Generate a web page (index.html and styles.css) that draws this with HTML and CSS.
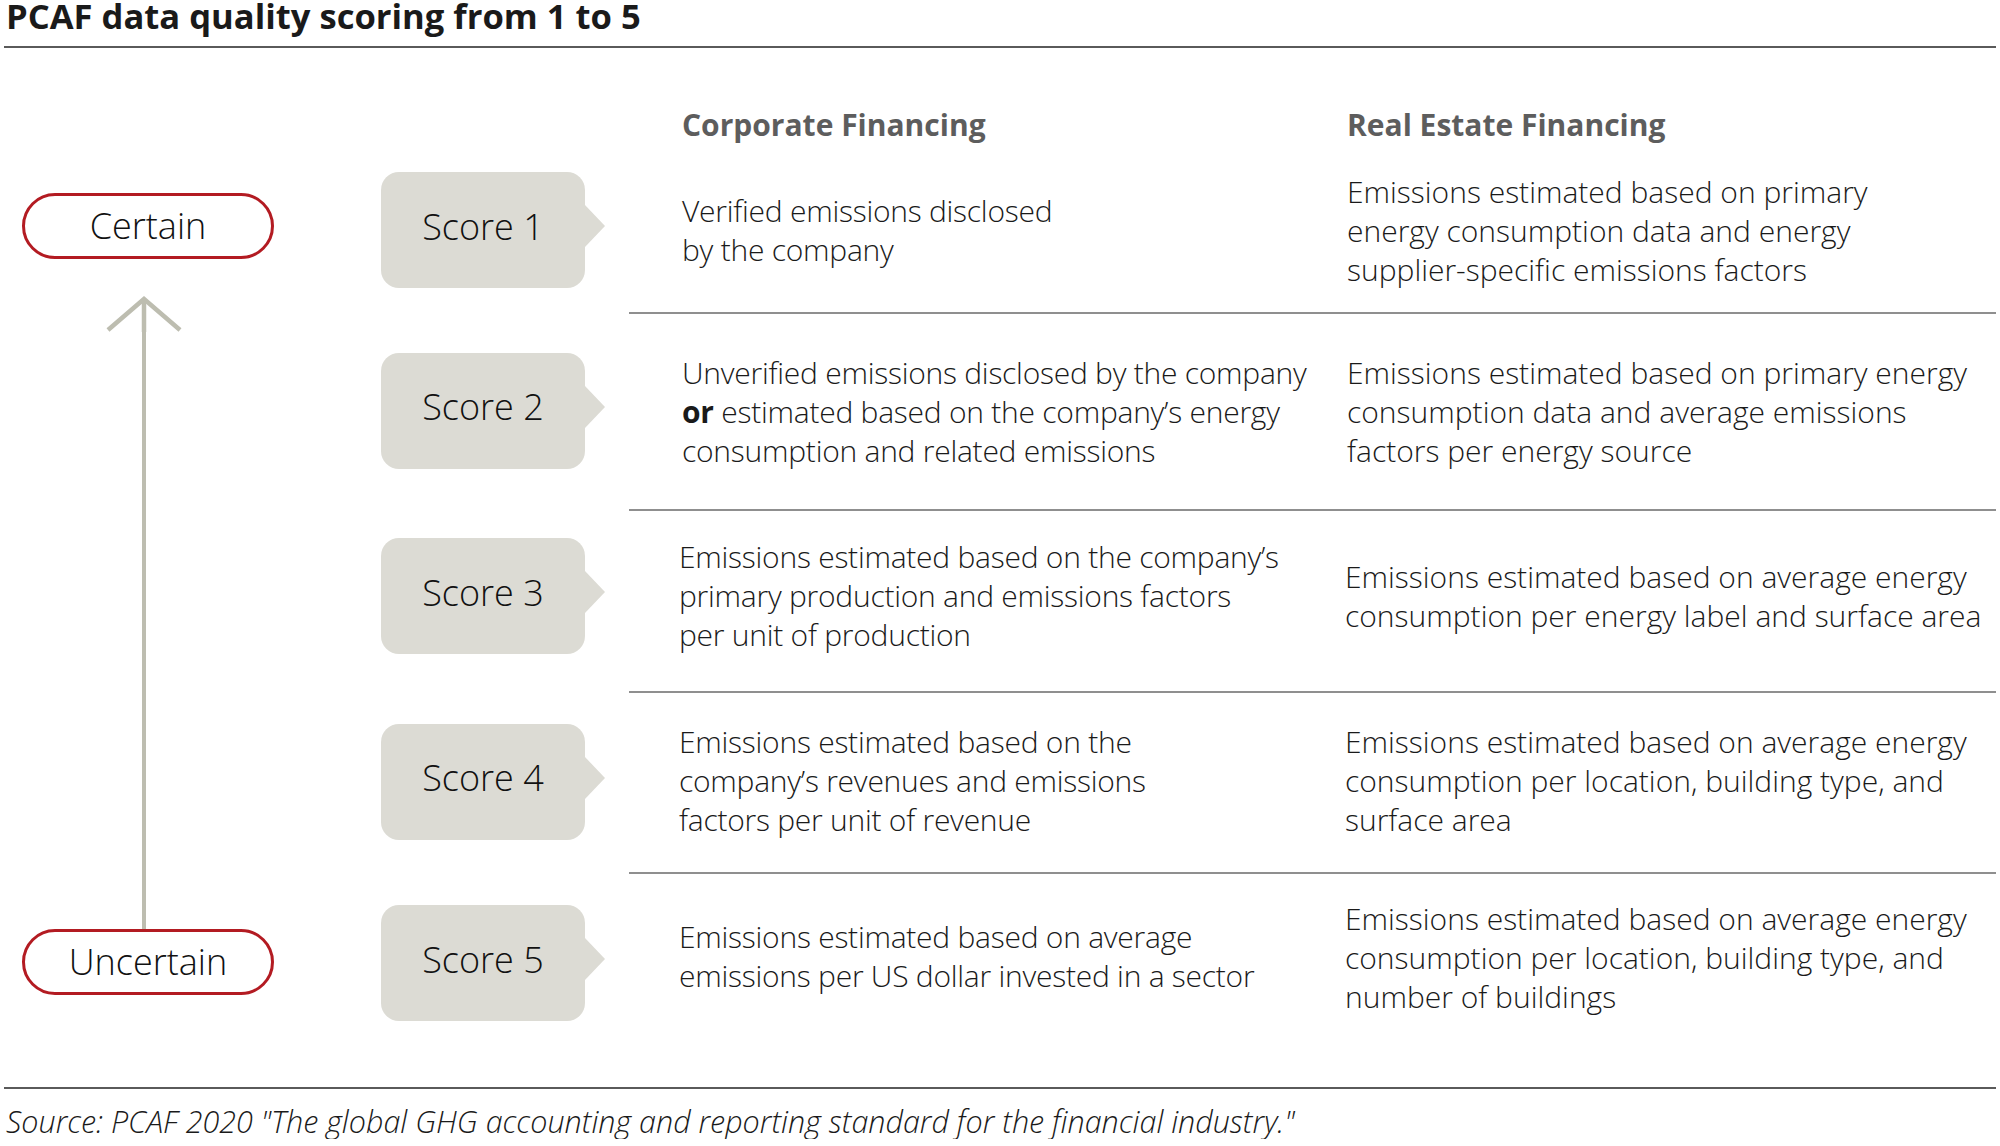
FILE: index.html
```html
<!DOCTYPE html>
<html lang="en">
<head>
<meta charset="utf-8">
<title>PCAF data quality scoring from 1 to 5</title>
<link rel="stylesheet" href="styles.css">
</head>
<body>
<div class="page">
  <h1 class="title">PCAF data quality scoring from 1 to 5</h1>

  <div class="chart">
    <div class="scale">
      <div class="pill">Certain</div>
      <div class="axis">
        <svg class="head" width="80" height="36" viewBox="0 0 80 36">
          <polyline points="4,34 40,3 76,34" fill="none" stroke="#bdbdb0" stroke-width="4.5"/>
          <line x1="40" y1="3" x2="40" y2="36" stroke="#bdbdb0" stroke-width="4.5"/>
        </svg>
        <div class="shaft"></div>
      </div>
      <div class="pill">Uncertain</div>
    </div>

    <div class="table">
      <div class="row row-head">
        <div class="score-cell"></div>
        <div class="texts">
          <div class="cell corp heading">Corporate Financing</div>
          <div class="cell re heading">Real Estate Financing</div>
        </div>
      </div>

      <div class="row r1">
        <div class="score-cell"><div class="score">Score 1</div></div>
        <div class="texts">
          <div class="cell corp"><span class="ln">Verified emissions disclosed</span><span class="ln">by the company</span></div>
          <div class="cell re"><span class="ln">Emissions estimated based on primary</span><span class="ln">energy consumption data and energy</span><span class="ln">supplier-specific emissions factors</span></div>
        </div>
      </div>

      <div class="row r2">
        <div class="score-cell"><div class="score">Score 2</div></div>
        <div class="texts sep">
          <div class="cell corp"><span class="ln">Unverified emissions disclosed by the company</span><span class="ln"><b>or</b> estimated based on the company’s energy</span><span class="ln">consumption and related emissions</span></div>
          <div class="cell re"><span class="ln">Emissions estimated based on primary energy</span><span class="ln">consumption data and average emissions</span><span class="ln">factors per energy source</span></div>
        </div>
      </div>

      <div class="row r3">
        <div class="score-cell"><div class="score">Score 3</div></div>
        <div class="texts sep">
          <div class="cell corp"><span class="ln">Emissions estimated based on the company’s</span><span class="ln">primary production and emissions factors</span><span class="ln">per unit of production</span></div>
          <div class="cell re"><span class="ln">Emissions estimated based on average energy</span><span class="ln">consumption per energy label and surface area</span></div>
        </div>
      </div>

      <div class="row r4">
        <div class="score-cell"><div class="score">Score 4</div></div>
        <div class="texts sep">
          <div class="cell corp"><span class="ln">Emissions estimated based on the</span><span class="ln">company’s revenues and emissions</span><span class="ln">factors per unit of revenue</span></div>
          <div class="cell re"><span class="ln">Emissions estimated based on average energy</span><span class="ln">consumption per location, building type, and</span><span class="ln">surface area</span></div>
        </div>
      </div>

      <div class="row r5">
        <div class="score-cell"><div class="score">Score 5</div></div>
        <div class="texts sep">
          <div class="cell corp"><span class="ln">Emissions estimated based on average</span><span class="ln">emissions per US dollar invested in a sector</span></div>
          <div class="cell re"><span class="ln">Emissions estimated based on average energy</span><span class="ln">consumption per location, building type, and</span><span class="ln">number of buildings</span></div>
        </div>
      </div>
    </div>
  </div>

  <p class="source">Source: PCAF 2020 "The global GHG accounting and reporting standard for the financial industry."</p>
</div>
</body>
</html>
```

FILE: styles.css
```css
* { box-sizing: border-box; }

html, body {
  margin: 0;
  padding: 0;
  background: #ffffff;
}

body {
  font-family: "Open Sans", "Noto Sans", sans-serif;
  color: #1a1a1a;
}

.page {
  width: 2000px;
  padding: 0 4px;
}

.title {
  margin: 0;
  height: 48px;
  padding: 0 0 0 2px;
  font-size: 34.6px;
  line-height: 32px;
  font-weight: 700;
  color: #1a1a1a;
  border-bottom: 2px solid #5a5a5a;
  white-space: nowrap;
}

.chart {
  display: flex;
  height: 1041px;
  border-bottom: 2px solid #5a5a5a;
}

.scale {
  width: 377px;
  flex: none;
  display: flex;
  flex-direction: column;
  align-items: flex-start;
  padding: 145px 0 92px 18px;
}

.pill {
  width: 252px;
  height: 66px;
  border: 3px solid #b31b22;
  border-radius: 33px;
  display: flex;
  align-items: center;
  justify-content: center;
  padding-bottom: 1px;
  font-size: 36px;
  font-weight: 300;
  color: #111;
}

.axis {
  flex: 1;
  width: 252px;
  display: flex;
  flex-direction: column;
  align-items: center;
  padding-top: 37px;
}

.head {
  display: block;
  flex: none;
  margin-left: -8px;
}

.shaft {
  flex: 1;
  width: 4.5px;
  margin-left: -8px;
  background: #bdbdb0;
}

.table {
  flex: 1;
  display: flex;
  flex-direction: column;
}

.row {
  display: flex;
}

.row-head { height: 100px; }
.r1 { height: 164px; }
.r2 { height: 197px; }
.r3 { height: 182px; }
.r4 { height: 181px; }
.r5 { height: 182px; }

.score-cell {
  width: 248px;
  flex: none;
  display: flex;
  align-items: center;
}

.r3 .score-cell { padding-bottom: 8px; }

.score {
  position: relative;
  width: 204px;
  height: 116px;
  background: #dcdbd4;
  border-radius: 18px;
  display: flex;
  align-items: center;
  justify-content: center;
  padding-bottom: 8px;
  font-size: 36px;
  font-weight: 300;
  color: #111;
}

.score::after {
  content: "";
  position: absolute;
  right: -20px;
  top: 50%;
  margin-top: -25px;
  border-top: 21px solid transparent;
  border-bottom: 21px solid transparent;
  border-left: 20px solid #dcdbd4;
}

.texts {
  flex: 1;
  display: grid;
  grid-template-columns: 701px 1fr;
}

.texts.sep {
  border-top: 2px solid #8f8f8f;
}

.cell {
  display: flex;
  flex-direction: column;
  justify-content: center;
  font-size: 30px;
  font-weight: 300;
  line-height: 39px;
  white-space: nowrap;
}

.r3 .cell { padding-bottom: 11px; }
.r4 .cell { padding-bottom: 5px; }
.r5 .cell { padding-bottom: 14px; }
.r5 .cell.corp { padding-bottom: 16px; }

.cell.corp {
  padding-left: 53px;
  letter-spacing: -0.25px;
}
.r3 .cell.corp,
.r4 .cell.corp,
.r5 .cell.corp { padding-left: 50px; }
.cell.re { padding-left: 17px; }
.r3 .cell.re,
.r4 .cell.re,
.r5 .cell.re { padding-left: 15px; }

.cell.heading {
  font-weight: 700;
  color: #5d5d5d;
  font-size: 30px;
  letter-spacing: 0;
  justify-content: flex-start;
  padding-top: 57px;
  line-height: 40px;
}

.cell b { font-weight: 700; }

.ln { display: block; }

.source {
  margin: 0;
  padding: 14px 0 0 2px;
  font-size: 30.5px;
  font-style: italic;
  font-weight: 300;
  line-height: 36px;
  white-space: nowrap;
  color: #1a1a1a;
}
```
